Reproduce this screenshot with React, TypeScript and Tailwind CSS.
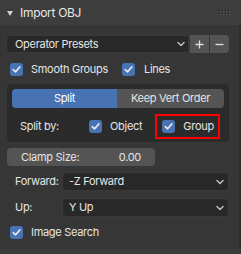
import React from "react";

const font = { fontFamily: "Inter, 'Liberation Sans', sans-serif" };

function Check() {
  return (
    <div className="w-[13px] h-[13px] rounded-[3px] bg-[#4772b3] flex items-center justify-center shrink-0">
      <svg width="11" height="11" viewBox="0 0 11 11">
        <path d="M2.2 5.6 L4.5 7.9 L8.9 2.9" fill="none" stroke="#e8e8e8" strokeWidth="1.6" strokeLinecap="round" strokeLinejoin="round" />
      </svg>
    </div>
  );
}

function Chevron() {
  return (
    <svg width="8" height="6" viewBox="0 0 8 6" className="shrink-0">
      <path d="M1 1.5 L4 4.5 L7 1.5" fill="none" stroke="#bdbdbd" strokeWidth="1.5" strokeLinecap="round" strokeLinejoin="round" />
    </svg>
  );
}

function Dots() {
  const dots = [];
  for (let r = 0; r < 2; r++) {
    for (let c = 0; c < 4; c++) {
      dots.push(<rect key={`${r}-${c}`} x={c * 3} y={r * 3} width="1" height="1" fill="#1e1e1e" />);
      dots.push(<rect key={`h${r}-${c}`} x={c * 3 + 1} y={r * 3 + 1} width="1" height="1" fill="#5a5a5a" />);
    }
  }
  return (
    <svg width="11" height="6" viewBox="0 0 11 6">
      {dots}
    </svg>
  );
}

export default function App() {
  return (
    <div className="w-[241px] h-[254px] bg-[#363636] text-[11px] tracking-[-0.3px] text-[#e5e5e5] relative overflow-hidden flex flex-col" style={font}>
      {/* header */}
      <div className="h-[25px] bg-[#3d3d3d] flex items-center shrink-0">
        <svg width="6" height="5" viewBox="0 0 6 5" className="ml-[7px] mt-[1px]">
          <path d="M0 0 L6 0 L3 5 Z" fill="#d0d0d0" />
        </svg>
        <span className="ml-[7px] text-[12px] text-[#e8e8e8]">Import OBJ</span>
        <div className="ml-auto mr-[11px] flex items-center">
          <Dots />
        </div>
      </div>

      {/* presets */}
      <div className="mt-[10px] ml-[6px] w-[223px] h-[18px] flex shrink-0">
        <div className="flex-1 h-full bg-[#282828] border border-[#3a3a3a] rounded-l-[4px] flex items-center pl-[8px] pr-[3px]">
          <span className="flex-1">Operator Presets</span>
          <Chevron />
        </div>
        <div className="w-[19px] ml-[1px] h-full bg-[#545454] flex items-center justify-center">
          <svg width="9" height="9" viewBox="0 0 9 9"><path d="M4.5 0.5 V8.5 M0.5 4.5 H8.5" stroke="#e0e0e0" strokeWidth="1.3" /></svg>
        </div>
        <div className="w-[19px] ml-[1px] h-full bg-[#545454] rounded-r-[4px] flex items-center justify-center">
          <svg width="9" height="9" viewBox="0 0 9 9"><path d="M0.5 4.5 H8.5" stroke="#e0e0e0" strokeWidth="1.3" /></svg>
        </div>
      </div>

      {/* smooth groups / lines */}
      <div className="mt-[10px] ml-[10px] h-[13px] flex items-center shrink-0">
        <Check />
        <span className="ml-[8px] w-[91px]">Smooth Groups</span>
        <Check />
        <span className="ml-[9px]">Lines</span>
      </div>

      {/* box */}
      <div className="mt-[8px] ml-[7px] w-[222px] h-[58px] bg-[#2b2b2b] rounded-[4px] pt-[5px] px-[5px] flex flex-col shrink-0">
        <div className="h-[19px] flex">
          <div className="w-[105px] h-full bg-[#4772b3] rounded-l-[4px] flex items-center justify-center text-white">Split</div>
          <div className="flex-1 h-full bg-[#545454] rounded-r-[4px] flex items-center justify-center">Keep Vert Order</div>
        </div>
        <div className="mt-[6px] h-[25px] flex items-center">
          <span className="ml-[8px] w-[69px]">Split by:</span>
          <Check />
          <span className="ml-[8px]">Object</span>
          <div className="ml-[13px] w-[65px] h-[25px] border-2 border-[#ff0000] flex items-center pl-[5px]">
            <Check />
            <span className="ml-[8px]">Group</span>
          </div>
        </div>
      </div>

      {/* clamp size */}
      <div className="mt-[6px] ml-[7px] w-[148px] h-[18px] bg-[#545454] rounded-[4px] flex items-center px-[14px] shrink-0">
        <span className="flex-1">Clamp Size:</span>
        <span>0.00</span>
      </div>

      {/* forward */}
      <div className="mt-[6px] ml-[15px] h-[19px] flex items-center shrink-0">
        <span className="w-[47px]">Forward:</span>
        <div className="w-[167px] h-full bg-[#282828] border border-[#3a3a3a] rounded-[4px] flex items-center pl-[6px] pr-[4px]">
          <span className="flex-1">-Z Forward</span>
          <Chevron />
        </div>
      </div>

      {/* up */}
      <div className="mt-[7px] ml-[15px] h-[19px] flex items-center shrink-0">
        <span className="w-[47px]">Up:</span>
        <div className="w-[167px] h-full bg-[#282828] border border-[#3a3a3a] rounded-[4px] flex items-center pl-[6px] pr-[4px]">
          <span className="flex-1">Y Up</span>
          <Chevron />
        </div>
      </div>

      {/* image search */}
      <div className="mt-[9px] ml-[10px] h-[13px] flex items-center shrink-0">
        <Check />
        <span className="ml-[8px]">Image Search</span>
      </div>

      <div className="mt-auto h-[5px] bg-[#3a3a3a] shrink-0" />
      <div className="absolute right-0 top-[25px] bottom-[5px] w-[2px] bg-[#2e2e2e]" />
    </div>
  );
}
